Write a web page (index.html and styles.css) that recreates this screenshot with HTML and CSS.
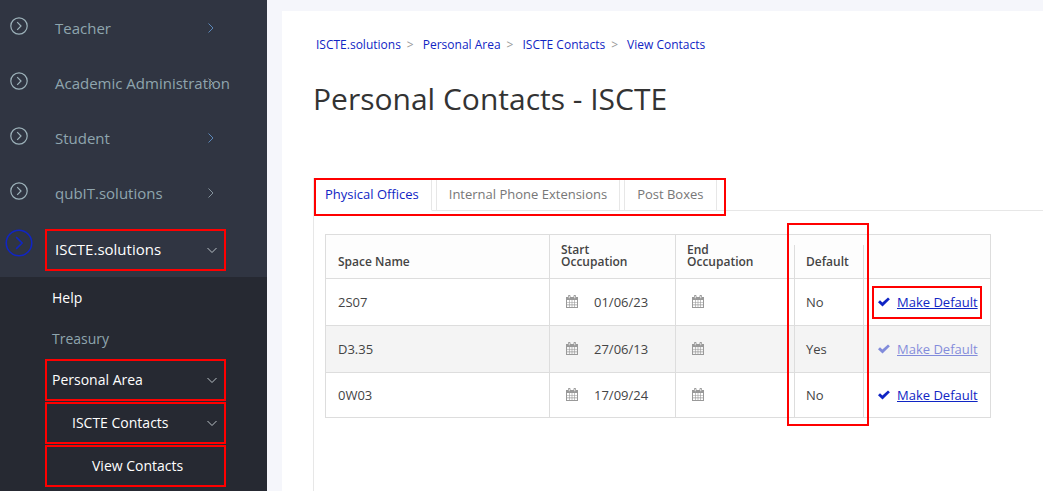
FILE: index.html
```html
<!DOCTYPE html>
<html lang="en">
<head>
    <meta charset="UTF-8">
    <meta name="viewport" content="width=device-width, initial-scale=1.0">
    <title>Personal Contacts - ISCTE</title>
    <link rel="stylesheet" href="styles.css">
</head>
<body>
    <svg class="symbols" aria-hidden="true">
        <symbol id="circle-arrow" viewBox="0 0 18 18">
            <circle cx="9" cy="9" r="8.2"/>
            <path d="M7.2 5.2 11 9l-3.8 3.8"/>
        </symbol>
        <symbol id="chevron" viewBox="0 0 12 12">
            <path d="M3.5 1.5 8 6l-4.5 4.5"/>
        </symbol>
        <symbol id="chevron-down" viewBox="0 0 12 12">
            <path d="M1.5 4 6 8.5 10.5 4"/>
        </symbol>
        <symbol id="calendar" viewBox="0 0 12 13">
            <path fill-rule="evenodd" d="M0 2h2V1a1 1 0 0 1 1-1h.5a1 1 0 0 1 1 1v1h3V1a1 1 0 0 1 1-1H9a1 1 0 0 1 1 1v1h2v11H0zM1 5v2h2V5zm2.600 0v2h2.100V5zm2.700 0v2h2.100V5zM9 5v2h2V5zM1 7.600v2h2v-2zm2.600 0v2h2.100v-2zm2.700 0v2h2.100v-2zM9 7.600v2h2v-2zM1 10.200V12h2v-1.800zm2.600 0V12h2.100v-1.800zm2.700 0V12h2.100v-1.800zM9 10.200V12h2v-1.800zM2.800 1v2.300h.8V1zm5.600 0v2.300h.8V1z"/>
        </symbol>
        <symbol id="check" viewBox="0 0 12 10">
            <path d="M0 5.300 2 3.300l2.400 2.300L10 .4l1.900 1.900L4.500 9.600z"/>
        </symbol>
    </svg>

    <nav class="sidebar">
        <ul class="menu">
            <li><a href="#" class="menu-item"><svg class="menu-icon"><use href="#circle-arrow"/></svg><span>Teacher</span><svg class="arrow blue"><use href="#chevron"/></svg></a></li>
            <li><a href="#" class="menu-item"><svg class="menu-icon"><use href="#circle-arrow"/></svg><span>Academic Administration</span><svg class="arrow"><use href="#chevron"/></svg></a></li>
            <li><a href="#" class="menu-item"><svg class="menu-icon"><use href="#circle-arrow"/></svg><span>Student</span><svg class="arrow blue"><use href="#chevron"/></svg></a></li>
            <li><a href="#" class="menu-item"><svg class="menu-icon"><use href="#circle-arrow"/></svg><span>qubIT.solutions</span><svg class="arrow"><use href="#chevron"/></svg></a></li>
            <li>
                <a href="#" class="current-link">
                    <svg class="menu-icon large"><use href="#circle-arrow"/></svg>
                    <span class="marked">ISCTE.solutions<svg class="arrow"><use href="#chevron-down"/></svg></span>
                </a>
            </li>
        </ul>
        <ul class="submenu">
            <li><a href="#" class="sub-item active">Help</a></li>
            <li><a href="#" class="sub-item">Treasury</a></li>
            <li><a href="#" class="sub-item active marked">Personal Area<svg class="arrow"><use href="#chevron-down"/></svg></a></li>
            <li><a href="#" class="sub-item active marked level-2">ISCTE Contacts<svg class="arrow"><use href="#chevron-down"/></svg></a></li>
            <li><a href="#" class="sub-item active marked level-3">View Contacts</a></li>
        </ul>
    </nav>

    <main class="main">
        <div class="content">
            <nav class="breadcrumb">
                <a href="#">ISCTE.solutions</a>
                <a href="#">Personal Area</a>
                <a href="#">ISCTE Contacts</a>
                <a href="#">View Contacts</a>
            </nav>
            <h1>Personal Contacts - ISCTE</h1>

            <div class="tab-panel">
                <div class="tabs" role="tablist">
                    <button class="tab selected" role="tab" aria-selected="true">Physical Offices</button>
                    <button class="tab" role="tab">Internal Phone Extensions</button>
                    <button class="tab" role="tab">Post Boxes</button>
                    <div class="tabs-mark"></div>
                </div>

                <div class="table-wrap">
                    <table>
                        <thead>
                            <tr>
                                <th class="col-space">Space Name</th>
                                <th class="col-start">Start Occupation</th>
                                <th class="col-end short-line">End Occupation</th>
                                <th class="col-default short-line">Default</th>
                                <th></th>
                            </tr>
                        </thead>
                        <tbody>
                            <tr>
                                <td>2S07</td>
                                <td><span class="date"><svg class="calendar"><use href="#calendar"/></svg>01/06/23</span></td>
                                <td><span class="date"><svg class="calendar"><use href="#calendar"/></svg></span></td>
                                <td class="default">No</td>
                                <td class="action"><a href="#" class="make-default boxed"><svg class="check"><use href="#check"/></svg><span>Make Default</span></a></td>
                            </tr>
                            <tr>
                                <td>D3.35</td>
                                <td><span class="date"><svg class="calendar"><use href="#calendar"/></svg>27/06/13</span></td>
                                <td><span class="date"><svg class="calendar"><use href="#calendar"/></svg></span></td>
                                <td class="default">Yes</td>
                                <td class="action"><a href="#" class="make-default disabled"><svg class="check"><use href="#check"/></svg><span>Make Default</span></a></td>
                            </tr>
                            <tr>
                                <td>0W03</td>
                                <td><span class="date"><svg class="calendar"><use href="#calendar"/></svg>17/09/24</span></td>
                                <td><span class="date"><svg class="calendar"><use href="#calendar"/></svg></span></td>
                                <td class="default">No</td>
                                <td class="action"><a href="#" class="make-default"><svg class="check"><use href="#check"/></svg><span>Make Default</span></a></td>
                            </tr>
                        </tbody>
                    </table>
                    <div class="column-mark"></div>
                </div>
            </div>
        </div>
    </main>
</body>
</html>
```
FILE: styles.css
```css
* {
    box-sizing: border-box;
}
body {
    margin: 0;
    display: flex;
    min-height: 100vh;
    font-family: 'Open Sans', 'Noto Sans', sans-serif;
    font-size: 13px;
    color: #444;
    background-color: #f5f6fb;
}
a {
    color: #1025c4;
    text-decoration: none;
}
ul {
    list-style: none;
    margin: 0;
    padding: 0;
}
.symbols {
    position: absolute;
    width: 0;
    height: 0;
}

/* Sidebar */
.sidebar {
    flex: none;
    width: 267px;
    background-color: #262932;
    font-size: 15px;
}
.menu {
    background-color: #303542;
    padding-bottom: 6px;
}
.menu-item {
    display: flex;
    align-items: center;
    height: 55px;
    padding-left: 10px;
    color: #8fa5ae;
    white-space: nowrap;
}
.menu-item span {
    width: 150px;
    margin-left: 27px;
}
.menu-icon {
    flex: none;
    width: 18px;
    height: 18px;
    margin-bottom: 3px;
    fill: none;
    stroke: #9db2ba;
    stroke-width: 1.2;
}
.menu-icon.large {
    width: 28px;
    height: 28px;
    margin-bottom: 14px;
    stroke: #1025c4;
    stroke-width: 1;
}
.arrow {
    flex: none;
    width: 12px;
    height: 12px;
    fill: none;
    stroke: #84929c;
}
.arrow.blue {
    stroke: #5b87b8;
}
.current-link {
    display: flex;
    align-items: center;
    padding: 9px 41px 0 5px;
}
.marked {
    display: flex;
    justify-content: space-between;
    align-items: center;
    height: 42px;
    border: 2px solid #f00;
    padding: 0 6px 2px 8px;
    color: #fff;
}
.current-link .marked {
    flex: 1;
    margin-left: 12px;
}
.marked .arrow {
    margin-top: 2px;
    stroke: #b9c1c6;
}
.submenu {
    display: flex;
    flex-direction: column;
    gap: 1px;
    padding: 0 41px 4px 45px;
    font-size: 14px;
}
.sub-item {
    display: flex;
    align-items: center;
    height: 40px;
    padding-left: 7px;
    color: #8fa5ae;
}
.sub-item.active {
    color: #fff;
}
.sub-item.marked {
    height: 42px;
    padding-left: 5px;
}
.sub-item.level-2 {
    padding-left: 25px;
}
.sub-item.level-3 {
    padding-left: 45px;
}

/* Content */
.main {
    flex: 1;
    display: flex;
    padding: 11px 0 0 15px;
}
.content {
    flex: 1;
    display: flex;
    flex-direction: column;
    padding: 24px 0 0 31px;
    background-color: #fff;
}
.breadcrumb {
    display: flex;
    padding-left: 3px;
    font-size: 12px;
    line-height: 20px;
}
.breadcrumb a + a::before {
    content: ">";
    padding: 0 9px 0 6px;
    color: #999;
}
h1 {
    margin: 20px 0 56px;
    font-size: 30px;
    font-weight: 400;
    line-height: 47px;
    color: #333;
}
.tab-panel {
    flex: 1;
    border-left: 1px solid #e7e7e7;
}
.tabs {
    position: relative;
    display: flex;
    gap: 4px;
    height: 33px;
    border-bottom: 1px solid #e7e7e7;
}
.tab {
    height: 33px;
    padding: 0 12px 2px;
    border: 1px solid #e7e7e7;
    background-color: #fff;
    color: #777;
    font-family: inherit;
    font-size: 13px;
    cursor: pointer;
}
.tab.selected {
    padding-left: 11px;
    border-left: 0;
    border-bottom-color: #fff;
    color: #1025c4;
}
.tabs-mark {
    position: absolute;
    top: 0;
    left: 0;
    width: 412px;
    height: 38px;
    border: 2px solid #f00;
}
.table-wrap {
    position: relative;
    display: inline-block;
    margin: 23px 0 0 11px;
}
table {
    table-layout: fixed;
    width: 666px;
    border-spacing: 0;
    border-top: 1px solid #ddd;
    border-left: 1px solid #ddd;
}
th, td {
    padding: 0 12px;
    border-right: 1px solid #ddd;
    border-bottom: 1px solid #ddd;
    text-align: left;
}
th {
    height: 44px;
    padding-bottom: 10px;
    background-color: #fdfdfd;
    vertical-align: bottom;
    font-size: 12px;
    font-weight: 600;
    line-height: 12px;
}
td {
    height: 47px;
}
tbody tr:last-child td {
    height: 45px;
}
tbody tr:nth-child(even) {
    background-color: #f4f4f4;
}
.col-space {
    width: 224px;
}
.col-start {
    width: 126px;
}
.col-end {
    width: 119px;
}
.col-default {
    width: 69px;
}
.col-start, .col-end, .col-default, td.default {
    padding-left: 11px;
}
.col-start, .col-end {
    padding-right: 30px;
}
/* separators that stop below the top edge of the header */
.short-line {
    border-right: 0;
    background-image: linear-gradient(#ddd, #ddd);
    background-position: right bottom;
    background-size: 1px 33px;
    background-repeat: no-repeat;
}
.date {
    display: flex;
    align-items: center;
    gap: 16px;
    padding-left: 4px;
}
.calendar {
    width: 12px;
    height: 13px;
    margin-bottom: 2px;
    fill: #999;
}
td.action {
    padding: 0 8px;
}
.make-default {
    display: flex;
    align-items: center;
    gap: 7px;
    height: 33px;
    padding-left: 4px;
    border: 2px solid transparent;
    white-space: nowrap;
}
.make-default span {
    text-decoration: underline;
}
.make-default.boxed {
    border-color: #f00;
}
.make-default.disabled {
    opacity: 0.5;
}
.check {
    width: 12px;
    height: 10px;
    fill: #1025c4;
}
.column-mark {
    position: absolute;
    top: -11px;
    right: 122px;
    bottom: -8px;
    width: 82px;
    border: 2px solid #f00;
}
```
